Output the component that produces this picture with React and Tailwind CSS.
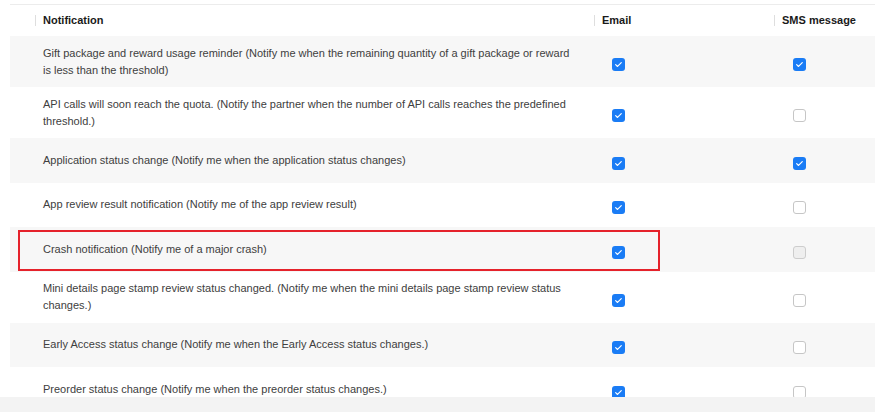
import React from "react";

const rows = [
  {
    label:
      "Gift package and reward usage reminder (Notify me when the remaining quantity of a gift package or reward is less than the threshold)",
    email: true,
    sms: true
  },
  {
    label:
      "API calls will soon reach the quota. (Notify the partner when the number of API calls reaches the predefined threshold.)",
    email: true,
    sms: false
  },
  {
    label: "Application status change (Notify me when the application status changes)",
    email: true,
    sms: true
  },
  {
    label: "App review result notification (Notify me of the app review result)",
    email: true,
    sms: false
  },
  {
    label: "Crash notification (Notify me of a major crash)",
    email: true,
    sms: false,
    disabled: true,
    highlight: true
  },
  {
    label:
      "Mini details page stamp review status changed. (Notify me when the mini details page stamp review status changes.)",
    email: true,
    sms: false
  },
  {
    label: "Early Access status change (Notify me when the Early Access status changes.)",
    email: true,
    sms: false
  },
  {
    label: "Preorder status change (Notify me when the preorder status changes.)",
    email: true,
    sms: false
  }
];

const Checkbox = ({ checked, disabled }) => {
  if (checked) {
    return (
      <span className="flex h-[13px] w-[13px] items-center justify-center rounded-[3px] bg-[#1a7cf5]">
        <svg viewBox="0 0 12 12" className="h-[9px] w-[9px]" fill="none">
          <path
            d="M2.2 6.2l2.5 2.4 5-5"
            stroke="#fff"
            strokeWidth="1.6"
            strokeLinecap="round"
            strokeLinejoin="round"
          />
        </svg>
      </span>
    );
  }
  return (
    <span
      className={
        disabled
          ? "block h-[13px] w-[13px] rounded-[3px] border border-[#cdcdcd] bg-[#efefef]"
          : "block h-[13px] w-[13px] rounded-[3px] border border-[#c6c6c6] bg-white"
      }
    />
  );
};

const HeaderCell = ({ children, className }) => (
  <div className={"flex items-center " + (className || "")}>
    <span className="mr-[7px] h-[11px] w-px bg-[#dedede]" />
    <span className="text-[11px] font-bold text-[#1a1a1a]">{children}</span>
  </div>
);

export default function App() {
  return (
    <div
      className="flex h-[412px] w-[875px] flex-col overflow-hidden bg-white"
      style={{ fontFamily: '"Liberation Sans", Arial, sans-serif' }}
    >
      <div className="flex-1 overflow-hidden pl-[10px] pt-[4px]">
        <div className="border-t border-[#ececec]">
          {/* header */}
          <div className="grid h-[31px] grid-cols-[25px_559px_180px_1fr]">
            <div />
            <HeaderCell>Notification</HeaderCell>
            <HeaderCell>Email</HeaderCell>
            <HeaderCell>SMS message</HeaderCell>
          </div>

          {rows.map((row, i) => (
            <div
              key={i}
              className={
                "relative grid min-h-[44.5px] grid-cols-[25px_559px_180px_1fr] " +
                (i % 2 === 0 ? "bg-[#f7f7f7]" : "bg-white")
              }
            >
              <div />
              <div className="flex items-center py-[8.5px] pl-[8px] pr-[20px] text-[11px] leading-[17px] text-[#404040]">
                {row.label}
              </div>
              <div className="flex items-center pl-[18px] pt-[6px]">
                <Checkbox checked={row.email} />
              </div>
              <div className="flex items-center pl-[19px] pt-[6px]">
                <Checkbox checked={row.sms} disabled={row.disabled} />
              </div>
              {row.highlight && (
                <div className="pointer-events-none absolute left-[8px] top-[3px] h-[41px] w-[642px] border-2 border-[#e5222b]" />
              )}
            </div>
          ))}
        </div>
      </div>
      <div className="h-[15px] bg-[#f3f3f3]" />
    </div>
  );
}
